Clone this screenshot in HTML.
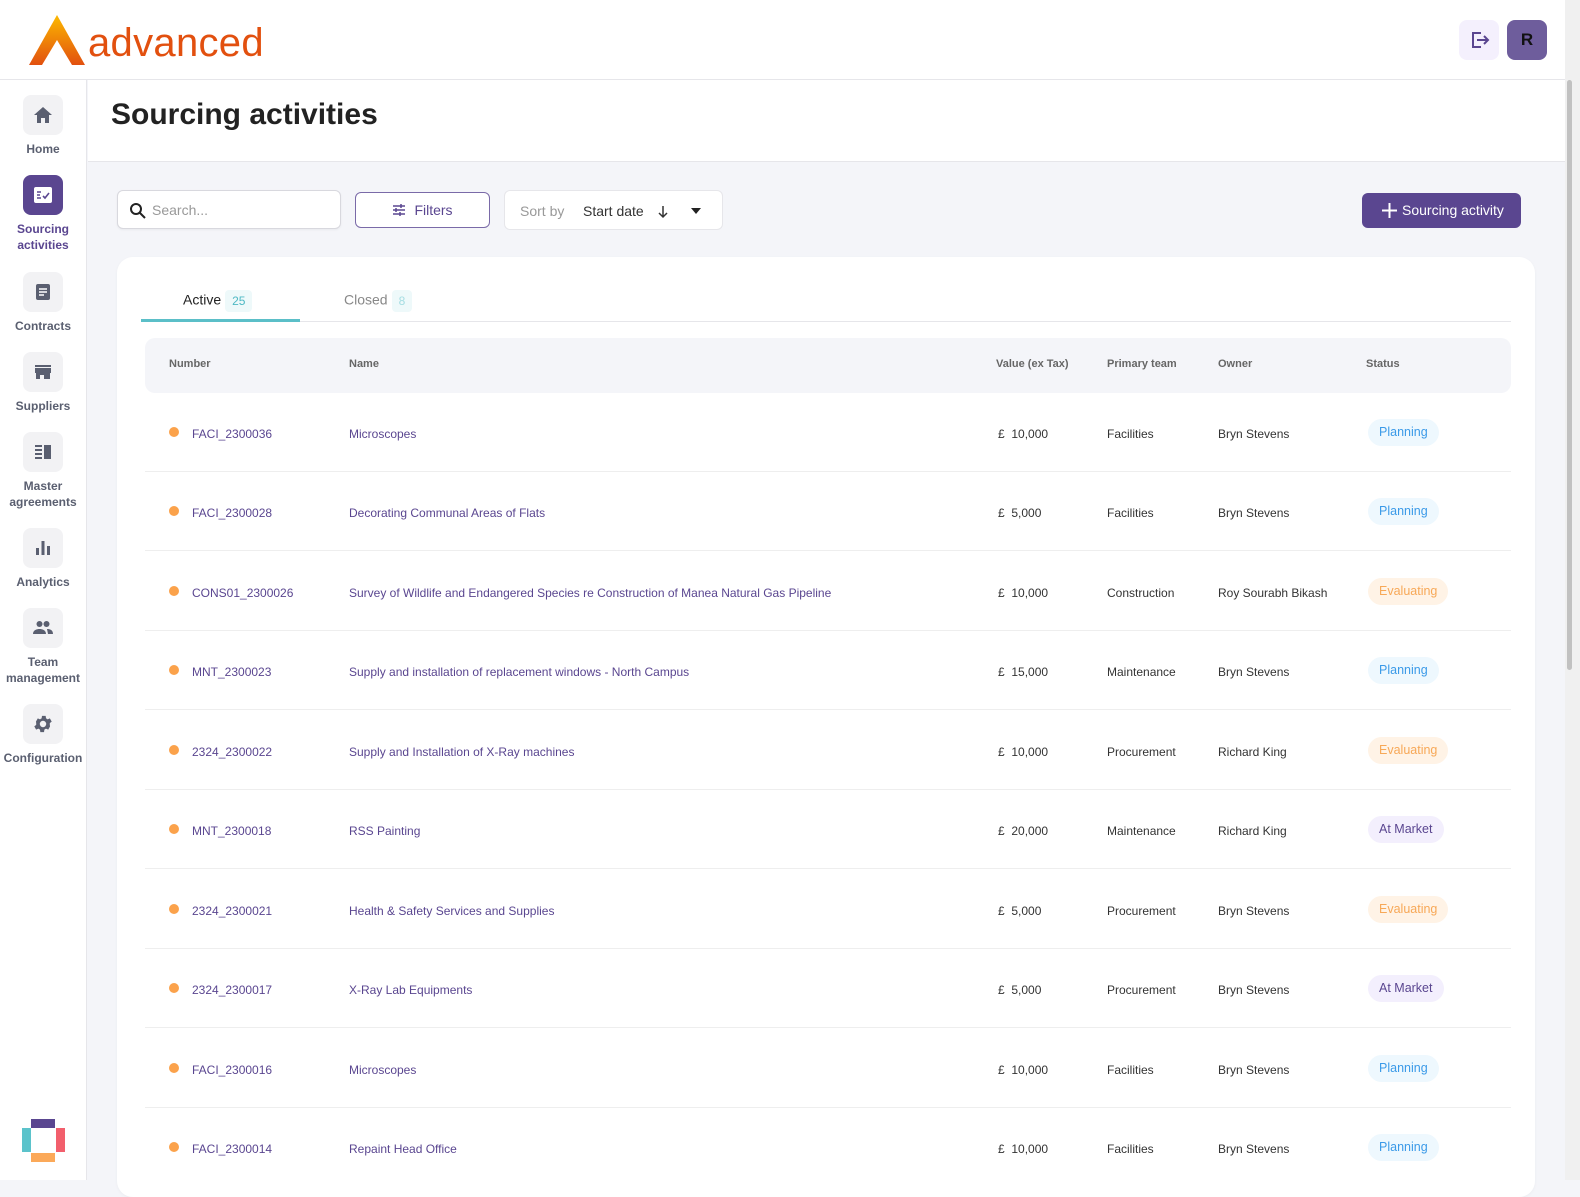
<!DOCTYPE html>
<html><head><meta charset="utf-8">
<style>
*{box-sizing:border-box;margin:0;padding:0}
body{width:1580px;height:1180px;overflow:hidden;background:#f4f5f9;font-family:"Liberation Sans",sans-serif;color:#333;position:relative}
.hdr{position:absolute;left:0;top:0;width:1565px;height:80px;background:#fff;border-bottom:1px solid #e6e6ea}
.logo{position:absolute;left:28px;top:14px}
.logo span{position:absolute;left:60px;top:7px;font-size:40px;color:#e2500f;letter-spacing:0.3px;white-space:nowrap}
.exit{position:absolute;left:1459px;top:20px;width:40px;height:40px;border-radius:8px;background:#f4f0fd}
.av{position:absolute;left:1507px;top:20px;width:40px;height:40px;border-radius:8px;background:#6e5d9c;color:#111;font-size:17px;font-weight:bold;text-align:center;line-height:40px}
.side{position:absolute;left:0;top:80px;width:87px;height:1100px;background:#fff;border-right:1px solid #e6e6ea}
.nav{position:absolute;left:0;width:86px;text-align:center;font-size:12px;font-weight:bold;color:#5a5f70;line-height:16px}
.nav .ic{width:40px;height:40px;border-radius:8px;background:#f2f2f4;margin:0 auto 6px;display:flex;align-items:center;justify-content:center}
.nav.on{color:#5a4690}.nav.on .ic{background:#5a4690}
.title{position:absolute;left:88px;top:80px;width:1477px;height:82px;background:#fff;border-bottom:1px solid #e6e6ea}
.title h1{position:absolute;left:23px;top:18px;font-size:30px;font-weight:bold;color:#222}
.search{position:absolute;left:117px;top:190px;width:224px;height:39px;background:#fff;border:1px solid #d8d8de;border-radius:6px;box-shadow:0 1px 2px rgba(0,0,0,.05)}
.search span{position:absolute;left:34px;top:11px;font-size:14px;color:#999}
.filt{position:absolute;left:355px;top:192px;width:135px;height:36px;border:1px solid #7a6aa8;border-radius:6px;background:#fff;color:#5a4690;font-size:14px;text-align:center;line-height:34px}
.sort{position:absolute;left:504px;top:190px;width:219px;height:40px;background:#fff;border:1px solid #e6e6ea;border-radius:6px;font-size:14px}
.btn{position:absolute;left:1362px;top:193px;width:159px;height:35px;background:#5a4690;border-radius:6px;color:#fff;font-size:14px;line-height:35px;padding-left:40px}
.card{position:absolute;left:117px;top:257px;width:1418px;height:940px;background:#fff;border-radius:16px;box-shadow:0 1px 3px rgba(0,0,0,.04)}
.tabs{position:absolute;left:24px;top:0;width:1370px;height:65px;border-bottom:1px solid #e6e6ea}
.tab{position:absolute;font-size:14px}
.cnt{display:inline-block;padding:0 7px;height:22px;line-height:22px;border-radius:4px;background:#eef9fa;color:#4fb9c4;font-size:12px;margin-left:4px;vertical-align:middle}
.uline{position:absolute;left:0;top:62px;width:159px;height:3px;background:#5bbfc8}
.thead{position:absolute;left:28px;top:80px;width:1366px;height:55px;background:#f4f5f9;border-radius:10px;font-size:11px;font-weight:bold;color:#666}
.thead div,.row div{position:absolute;white-space:nowrap}
.thead div{top:21px}
.row{position:absolute;left:28px;width:1366px;height:80px;border-bottom:1px solid #eee;font-size:12px;color:#333}
.row div{top:35px}
.dot{width:10px;height:10px;border-radius:50%;background:#fba24b;left:24px!important;top:35px!important}
.num,.nm{color:#5a4690}
.badge{top:27px!important;height:27px;line-height:27px;padding:0 11px;border-radius:14px;font-size:12.5px}
.pl{background:#eef8fe;color:#3b9ae8}.ev{background:#fff3e6;color:#f7a857}.am{background:#f3effd;color:#5a4690}
.sb{position:absolute;left:1565px;top:0;width:15px;height:1180px;background:#f0f0f0}
.sb i{position:absolute;left:2px;top:80px;width:5px;height:590px;background:#c1c1c1;border-radius:3px}
</style></head><body>
<div class="hdr">
 <div class="logo"><svg width="58" height="52" viewBox="0 0 58 52"><defs><linearGradient id="g" x1="0" y1="0" x2="0" y2="1"><stop offset="0" stop-color="#fcb900"/><stop offset="1" stop-color="#e2500f"/></linearGradient></defs><path d="M29 1 L57 51 L44 51 L29 26 L14 51 L1 51 Z" fill="url(#g)"/></svg><span>advanced</span></div>
 <div class="exit"><svg width="40" height="40" viewBox="0 0 40 40" fill="none" stroke="#5a4690" stroke-width="2"><path d="M22 13h-8v14h8"/><path d="M18 20h10M25 16l4 4-4 4"/></svg></div>
 <div class="av">R</div>
</div>
<div class="side">
 <div class="nav" style="top:15px"><div class="ic"><svg width="20" height="20" viewBox="0 0 20 20"><path d="M10 2L1 10h3v8h4v-5h4v5h4v-8h3z" fill="#5a5f70"/></svg></div>Home</div>
 <div class="nav on" style="top:95px"><div class="ic"><svg width="22" height="22" viewBox="0 0 22 22"><rect x="2" y="3" width="18" height="16" rx="2" fill="#fff"/><path d="M5 8h4M5 11h3M5 14h4" stroke="#5a4690" stroke-width="1.6"/><path d="M11 12l2 2 4-5" stroke="#5a4690" stroke-width="1.6" fill="none"/></svg></div>Sourcing<br>activities</div>
 <div class="nav" style="top:192px"><div class="ic"><svg width="20" height="20" viewBox="0 0 20 20"><rect x="3" y="2" width="14" height="16" rx="2" fill="#5a5f70"/><path d="M6 7h8M6 10h8M6 13h5" stroke="#fff" stroke-width="1.5"/></svg></div>Contracts</div>
 <div class="nav" style="top:272px"><div class="ic"><svg width="20" height="20" viewBox="0 0 20 20"><rect x="2" y="3" width="16" height="2" fill="#5a5f70"/><rect x="2" y="6" width="16" height="5" fill="#5a5f70"/><path d="M3 11v6h4v-4h4v4h6v-6" fill="#5a5f70"/></svg></div>Suppliers</div>
 <div class="nav" style="top:352px"><div class="ic"><svg width="20" height="20" viewBox="0 0 20 20"><path d="M2 4h7M2 8h7M2 12h7M2 16h7" stroke="#5a5f70" stroke-width="2"/><rect x="11" y="3" width="7" height="14" fill="#5a5f70"/></svg></div>Master<br>agreements</div>
 <div class="nav" style="top:448px"><div class="ic"><svg width="20" height="20" viewBox="0 0 20 20"><rect x="3" y="10" width="3" height="7" fill="#5a5f70"/><rect x="8.5" y="3" width="3" height="14" fill="#5a5f70"/><rect x="14" y="8" width="3" height="9" fill="#5a5f70"/></svg></div>Analytics</div>
 <div class="nav" style="top:528px"><div class="ic"><svg width="22" height="20" viewBox="0 0 22 20"><circle cx="7.5" cy="6" r="3" fill="#5a5f70"/><circle cx="14.5" cy="6" r="3" fill="#5a5f70"/><path d="M1 16c0-4 4-5 6.5-5s6.5 1 6.5 5z M15 11c3 0 6 1 6 5h-5" fill="#5a5f70"/></svg></div>Team<br>management</div>
 <div class="nav" style="top:624px"><div class="ic"><svg width="22" height="22" viewBox="0 0 24 24"><path fill="#5a5f70" d="M19.4 13a7.5 7.5 0 000-2l2.1-1.6-2-3.5-2.5 1a7 7 0 00-1.7-1l-.4-2.7h-4l-.4 2.7a7 7 0 00-1.7 1l-2.5-1-2 3.5L4.6 11a7.5 7.5 0 000 2l-2.1 1.6 2 3.5 2.5-1a7 7 0 001.7 1l.4 2.7h4l.4-2.7a7 7 0 001.7-1l2.5 1 2-3.5zM12 15.5a3.5 3.5 0 110-7 3.5 3.5 0 010 7z"/></svg></div>Configuration</div>
 <svg style="position:absolute;left:21px;top:1038px" width="46" height="46" viewBox="0 0 46 46"><rect x="10" y="1" width="24" height="9" fill="#5a4690"/><rect x="1" y="10" width="9" height="24" fill="#5bc3cb"/><rect x="35" y="10" width="9" height="24" fill="#f25f6c"/><rect x="10" y="35" width="24" height="9" fill="#fba959"/></svg>
</div>
<div class="title"><h1>Sourcing activities</h1></div>
<div class="search"><svg style="position:absolute;left:11px;top:11px" width="18" height="18" viewBox="0 0 18 18" fill="none" stroke="#222" stroke-width="2"><circle cx="7" cy="7" r="5"/><path d="M11 11l5 5"/></svg><span>Search...</span></div>
<div class="filt"><svg style="vertical-align:-2px;margin-right:8px" width="14" height="14" viewBox="0 0 14 14" stroke="#5a4690" stroke-width="1.5"><path d="M1 3h12M1 7h12M1 11h12"/><path d="M9 1v4M4 5v4M8 9v4"/></svg>Filters</div>
<div class="sort"><span style="position:absolute;left:15px;top:12px;color:#999">Sort by</span><span style="position:absolute;left:78px;top:12px;color:#333">Start date</span><svg style="position:absolute;left:152px;top:14px" width="12" height="14" viewBox="0 0 12 14" stroke="#333" stroke-width="1.5" fill="none"><path d="M6 1v11M2 8l4 4 4-4"/></svg><svg style="position:absolute;left:186px;top:17px" width="10" height="6"><path d="M0 0h10L5 6z" fill="#222"/></svg></div>
<div class="btn"><svg style="position:absolute;left:20px;top:10px" width="15" height="15" stroke="#fff" stroke-width="2"><path d="M7.5 0v15M0 7.5h15"/></svg>Sourcing activity</div>
<div class="card">
 <div class="tabs"><div class="tab" style="left:42px;top:33px;color:#222">Active<span class="cnt">25</span></div><div class="tab" style="left:203px;top:33px;color:#888">Closed<span class="cnt" style="color:#a5dde2">8</span></div><div class="uline"></div></div>
 <div class="thead" style="top:81px"><div style="left:24px;top:20px">Number</div><div style="left:204px;top:20px">Name</div><div style="left:851px;top:20px">Value (ex Tax)</div><div style="left:962px;top:20px">Primary team</div><div style="left:1073px;top:20px">Owner</div><div style="left:1221px;top:20px">Status</div></div>
 <div class="row" style="top:135px"><div class="dot"></div><div class="num" style="left:47px">FACI_2300036</div><div class="nm" style="left:204px">Microscopes</div><div style="left:853px">£&nbsp; 10,000</div><div style="left:962px">Facilities</div><div style="left:1073px">Bryn Stevens</div><div class="badge pl" style="left:1223px">Planning</div></div>
 <div class="row" style="top:214px"><div class="dot"></div><div class="num" style="left:47px">FACI_2300028</div><div class="nm" style="left:204px">Decorating Communal Areas of Flats</div><div style="left:853px">£&nbsp; 5,000</div><div style="left:962px">Facilities</div><div style="left:1073px">Bryn Stevens</div><div class="badge pl" style="left:1223px">Planning</div></div>
 <div class="row" style="top:294px"><div class="dot"></div><div class="num" style="left:47px">CONS01_2300026</div><div class="nm" style="left:204px">Survey of Wildlife and Endangered Species re Construction of Manea Natural Gas Pipeline</div><div style="left:853px">£&nbsp; 10,000</div><div style="left:962px">Construction</div><div style="left:1073px">Roy Sourabh Bikash</div><div class="badge ev" style="left:1223px">Evaluating</div></div>
 <div class="row" style="top:373px"><div class="dot"></div><div class="num" style="left:47px">MNT_2300023</div><div class="nm" style="left:204px">Supply and installation of replacement windows - North Campus</div><div style="left:853px">£&nbsp; 15,000</div><div style="left:962px">Maintenance</div><div style="left:1073px">Bryn Stevens</div><div class="badge pl" style="left:1223px">Planning</div></div>
 <div class="row" style="top:453px"><div class="dot"></div><div class="num" style="left:47px">2324_2300022</div><div class="nm" style="left:204px">Supply and Installation of X-Ray machines</div><div style="left:853px">£&nbsp; 10,000</div><div style="left:962px">Procurement</div><div style="left:1073px">Richard King</div><div class="badge ev" style="left:1223px">Evaluating</div></div>
 <div class="row" style="top:532px"><div class="dot"></div><div class="num" style="left:47px">MNT_2300018</div><div class="nm" style="left:204px">RSS Painting</div><div style="left:853px">£&nbsp; 20,000</div><div style="left:962px">Maintenance</div><div style="left:1073px">Richard King</div><div class="badge am" style="left:1223px">At Market</div></div>
 <div class="row" style="top:612px"><div class="dot"></div><div class="num" style="left:47px">2324_2300021</div><div class="nm" style="left:204px">Health &amp; Safety Services and Supplies</div><div style="left:853px">£&nbsp; 5,000</div><div style="left:962px">Procurement</div><div style="left:1073px">Bryn Stevens</div><div class="badge ev" style="left:1223px">Evaluating</div></div>
 <div class="row" style="top:691px"><div class="dot"></div><div class="num" style="left:47px">2324_2300017</div><div class="nm" style="left:204px">X-Ray Lab Equipments</div><div style="left:853px">£&nbsp; 5,000</div><div style="left:962px">Procurement</div><div style="left:1073px">Bryn Stevens</div><div class="badge am" style="left:1223px">At Market</div></div>
 <div class="row" style="top:771px"><div class="dot"></div><div class="num" style="left:47px">FACI_2300016</div><div class="nm" style="left:204px">Microscopes</div><div style="left:853px">£&nbsp; 10,000</div><div style="left:962px">Facilities</div><div style="left:1073px">Bryn Stevens</div><div class="badge pl" style="left:1223px">Planning</div></div>
 <div class="row" style="top:850px;border:none"><div class="dot"></div><div class="num" style="left:47px">FACI_2300014</div><div class="nm" style="left:204px">Repaint Head Office</div><div style="left:853px">£&nbsp; 10,000</div><div style="left:962px">Facilities</div><div style="left:1073px">Bryn Stevens</div><div class="badge pl" style="left:1223px">Planning</div></div>
</div>
<div class="sb"><i></i></div>
</body></html>
